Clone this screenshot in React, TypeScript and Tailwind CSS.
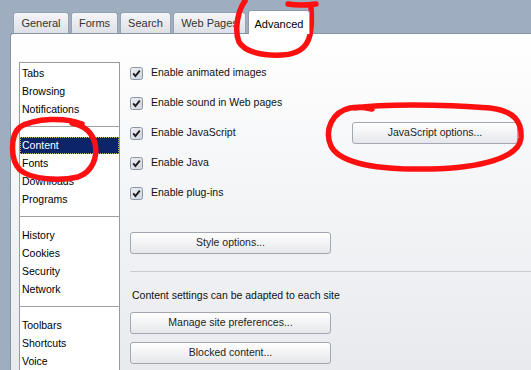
import React from "react";

function Check() {
  return (
    <svg width="13" height="13" viewBox="0 0 13 13" className="shrink-0">
      <defs>
        <linearGradient id="cbg" x1="0" y1="0" x2="1" y2="1">
          <stop offset="0" stopColor="#eef0f5" />
          <stop offset="1" stopColor="#cfd5de" />
        </linearGradient>
      </defs>
      <rect x="0.5" y="0.5" width="12" height="12" rx="2" fill="url(#cbg)" stroke="#8c96a4" />
      <polyline points="3.2,6.4 5.4,9 9.8,3.6" fill="none" stroke="#1c1c1c" strokeWidth="1.9" />
    </svg>
  );
}

function Btn({ w, children }: { w: string; children: React.ReactNode }) {
  return (
    <div
      className={`${w} h-[22px] shrink-0 rounded-[3px] border border-[#a3a8b0] bg-gradient-to-b from-[#ffffff] to-[#e6e7ea] flex items-center justify-center text-[#1e1e1e]`}
    >
      {children}
    </div>
  );
}

function Tab({ label, w, active }: { label: string; w: string; active?: boolean }) {
  if (active) {
    return (
      <div
        className={`${w} h-[24px] mb-[-1px] relative z-10 rounded-t-[3px] border border-b-0 border-[#8e9aab] bg-white flex items-center justify-center text-black pt-[3px] text-[11px]`}
      >
        {label}
      </div>
    );
  }
  return (
    <div
      className={`${w} h-[21px] rounded-t-[3px] border border-b-0 border-[#96a2b2] bg-gradient-to-b from-[#f4f5f7] to-[#dde0e5] flex items-center justify-center text-[#333] pt-[1px] text-[11px]`}
    >
      {label}
    </div>
  );
}

function Item({ label, selected }: { label: string; selected?: boolean }) {
  if (selected) {
    return (
      <div className="h-[18px] flex items-center">
        <div className="h-[17px] w-full bg-[#0c246a] text-white pl-[2px] flex items-center pt-[2px] outline outline-1 outline-dotted outline-[#c8b060] -outline-offset-1">
          {label}
        </div>
      </div>
    );
  }
  return <div className="h-[18px] leading-[18px] pl-[2px] text-black">{label}</div>;
}

export default function App() {
  return (
    <div className="relative w-[531px] h-[370px] overflow-hidden bg-[#9eadc0] font-['Liberation_Sans',Arial,sans-serif] text-[10.5px]">
      {/* tabs */}
      <div className="flex items-end h-[33px] pl-[13px] gap-[2px]">
        <Tab label="General" w="w-[56px]" />
        <Tab label="Forms" w="w-[47px]" />
        <Tab label="Search" w="w-[51px]" />
        <Tab label="Web Pages" w="w-[73px]" />
        <Tab label="Advanced" w="w-[62px]" active />
      </div>
      {/* panel */}
      <div className="ml-[10px] h-[337px] border-t border-l border-[#8494a6] rounded-tl-[3px] bg-gradient-to-b from-[#ffffff] to-[#e8eaee] flex">
        {/* list */}
        <div className="ml-[8px] mt-[28px] w-[101px] h-[400px] border border-[#9a9a9a] bg-white shrink-0">
          <div className="pt-[1px] pb-[8px] border-b border-[#a0a0a0]">
            <Item label="Tabs" />
            <Item label="Browsing" />
            <Item label="Notifications" />
          </div>
          <div className="pt-[9px] pb-[8px] border-b border-[#a0a0a0]">
            <Item label="Content" selected />
            <Item label="Fonts" />
            <Item label="Downloads" />
            <Item label="Programs" />
          </div>
          <div className="pt-[9px] pb-[8px] border-b border-[#a0a0a0]">
            <Item label="History" />
            <Item label="Cookies" />
            <Item label="Security" />
            <Item label="Network" />
          </div>
          <div className="pt-[9px] pb-[8px]">
            <Item label="Toolbars" />
            <Item label="Shortcuts" />
            <Item label="Voice" />
          </div>
        </div>
        {/* right column */}
        <div className="flex-1 ml-[10px] pt-[24px] flex flex-col text-[#111]">
          <div className="h-[30px] flex items-center gap-[8px]">
            <Check />
            <span>Enable animated images</span>
          </div>
          <div className="h-[30px] flex items-center gap-[8px]">
            <Check />
            <span>Enable sound in Web pages</span>
          </div>
          <div className="h-[30px] flex items-center gap-[8px]">
            <Check />
            <span>Enable JavaScript</span>
            <div className="ml-auto mr-[13px]">
              <Btn w="w-[166px]">JavaScript options...</Btn>
            </div>
          </div>
          <div className="h-[30px] flex items-center gap-[8px]">
            <Check />
            <span>Enable Java</span>
          </div>
          <div className="h-[30px] flex items-center gap-[8px]">
            <Check />
            <span>Enable plug-ins</span>
          </div>
          <div className="mt-[24px]">
            <Btn w="w-[201px]">Style options...</Btn>
          </div>
          <div className="mt-[17px] h-px bg-[#c9cdd3]" />
          <div className="mt-[16px] h-[14px] leading-[14px] pl-[2px]">Content settings can be adapted to each site</div>
          <div className="mt-[10px]">
            <Btn w="w-[201px]">Manage site preferences...</Btn>
          </div>
          <div className="mt-[8px]">
            <Btn w="w-[201px]">Blocked content...</Btn>
          </div>
        </div>
      </div>
      {/* red annotations */}
      <svg
        className="absolute left-0 top-0 pointer-events-none"
        width="531"
        height="370"
        viewBox="0 0 531 370"
      >
        <g fill="none" stroke="#ff1010" strokeWidth="5.5" strokeLinecap="round" strokeLinejoin="round">
          <path d="M 245 1 C 238 10, 234 30, 239 42 C 245 52, 262 56, 282 55 C 302 54, 310 44, 311 28 C 312 18, 311 10, 311 5 M 288 4 C 300 6, 308 5, 316 4" />
          <path d="M 355 108 C 380 104, 440 104, 490 108 C 515 111, 522 122, 521 138 C 519 158, 480 168, 430 169 C 380 170, 340 164, 331 146 C 324 130, 332 112, 350 108 C 360 106, 368 108, 372 109" />
          <path d="M 82 124 C 65 117, 35 118, 20 127 C 10 135, 10 160, 20 170 C 32 180, 60 181, 78 177 C 92 172, 98 158, 95 143 C 92 133, 86 126, 72 123" />
        </g>
      </svg>
    </div>
  );
}
